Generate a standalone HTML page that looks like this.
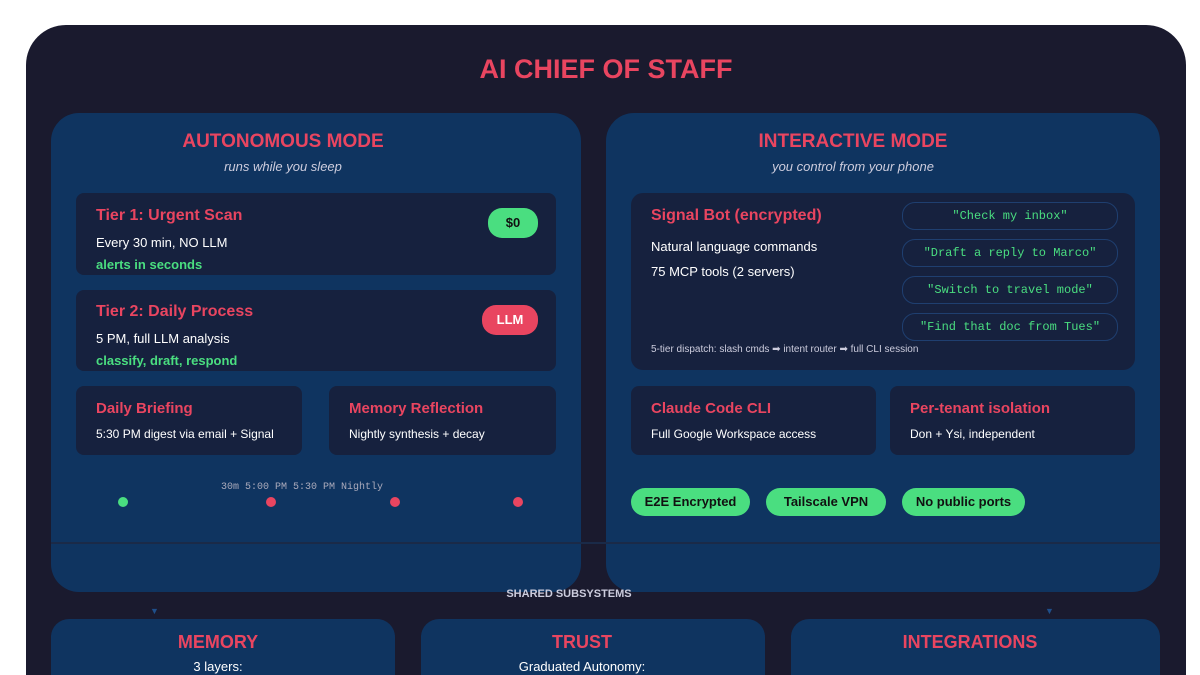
<!DOCTYPE html>
<html style="width:1200px;height:675px;overflow:hidden"><head><style>
*{margin:0;padding:0;box-sizing:border-box}
body{width:1200px;height:675px;background:#fff;font-family:"Liberation Sans",sans-serif;position:relative;overflow:hidden}
.a{position:absolute}
.outer{left:26px;top:25px;width:1160px;height:650px;background:#1a1a2e;border-radius:40px 40px 0 0}
.panel{background:#0f3460;border-radius:28px}
.card{background:#16213e;border-radius:8px}
.red{color:#e94560;font-weight:bold}
.t{color:#fff;font-size:13px}
.g{color:#4ade80;font-weight:bold;font-size:13px}
.pill{border-radius:14px;text-align:center;font-weight:bold;font-size:13px;line-height:28px}
.cmd{background:#16213e;border:1px solid #1f3f70;border-radius:13px;font-family:"Liberation Mono",monospace;font-size:12px;color:#4ade80;text-align:center;line-height:26px;width:216px;height:28px;left:902px}
.bad{background:#4ade80;color:#111;font-size:13px;font-weight:bold;border-radius:14px;text-align:center;line-height:28px;height:28px;top:488px}
.ct{text-align:center}
</style></head><body>
<div class="a outer"></div>
<div class="a red ct" style="left:26px;width:1160px;top:54px;font-size:27px">AI CHIEF OF STAFF</div>

<div class="a panel" style="left:51px;top:113px;width:530px;height:479px"></div>
<div class="a panel" style="left:606px;top:113px;width:554px;height:479px"></div>
<div class="a" style="left:51px;top:542px;width:1109px;height:2px;background:#1a2a48"></div>

<div class="a red ct" style="left:51px;width:464px;top:131px;font-size:19px">AUTONOMOUS MODE</div>
<div class="a ct" style="left:51px;width:464px;top:159px;font-size:13px;font-style:italic;color:#ccd">runs while you sleep</div>

<div class="a card" style="left:76px;top:193px;width:480px;height:82px"></div>
<div class="a red" style="left:96px;top:207px;font-size:16px">Tier 1: Urgent Scan</div>
<div class="a t" style="left:96px;top:235px">Every 30 min, NO LLM</div>
<div class="a g" style="left:96px;top:257px">alerts in seconds</div>
<div class="a pill" style="left:488px;top:208px;width:50px;height:30px;background:#4ade80;color:#111;line-height:30px">$0</div>

<div class="a card" style="left:76px;top:290px;width:480px;height:81px"></div>
<div class="a red" style="left:96px;top:303px;font-size:16px">Tier 2: Daily Process</div>
<div class="a t" style="left:96px;top:331px">5 PM, full LLM analysis</div>
<div class="a g" style="left:96px;top:353px">classify, draft, respond</div>
<div class="a pill" style="left:482px;top:305px;width:56px;height:30px;background:#e94560;color:#fff;line-height:30px">LLM</div>

<div class="a card" style="left:76px;top:386px;width:226px;height:69px"></div>
<div class="a red" style="left:96px;top:400px;font-size:15px">Daily Briefing</div>
<div class="a t" style="left:96px;top:427px;font-size:12px">5:30 PM digest via email + Signal</div>
<div class="a card" style="left:329px;top:386px;width:227px;height:69px"></div>
<div class="a red" style="left:349px;top:400px;font-size:15px">Memory Reflection</div>
<div class="a t" style="left:349px;top:427px;font-size:12px">Nightly synthesis + decay</div>

<div class="a" style="left:221px;top:482px;font-family:'Liberation Mono',monospace;font-size:10px;color:#aab">30m 5:00 PM 5:30 PM Nightly</div>
<div class="a" style="left:118px;top:497px;width:10px;height:10px;border-radius:5px;background:#4ade80"></div>
<div class="a" style="left:266px;top:497px;width:10px;height:10px;border-radius:5px;background:#e94560"></div>
<div class="a" style="left:390px;top:497px;width:10px;height:10px;border-radius:5px;background:#e94560"></div>
<div class="a" style="left:513px;top:497px;width:10px;height:10px;border-radius:5px;background:#e94560"></div>

<div class="a red ct" style="left:606px;width:494px;top:131px;font-size:19px">INTERACTIVE MODE</div>
<div class="a ct" style="left:606px;width:494px;top:159px;font-size:13px;font-style:italic;color:#ccd">you control from your phone</div>

<div class="a card" style="left:631px;top:193px;width:504px;height:177px;border-radius:12px"></div>
<div class="a red" style="left:651px;top:207px;font-size:16px">Signal Bot (encrypted)</div>
<div class="a t" style="left:651px;top:239px">Natural language commands</div>
<div class="a t" style="left:651px;top:264px">75 MCP tools (2 servers)</div>
<div class="a t" style="left:651px;top:344px;font-size:10px;color:#ccd">5-tier dispatch: slash cmds ➡ intent router ➡ full CLI session</div>
<div class="a cmd" style="top:202px">"Check my inbox"</div>
<div class="a cmd" style="top:239px">"Draft a reply to Marco"</div>
<div class="a cmd" style="top:276px">"Switch to travel mode"</div>
<div class="a cmd" style="top:313px">"Find that doc from Tues"</div>

<div class="a card" style="left:631px;top:386px;width:245px;height:69px"></div>
<div class="a red" style="left:651px;top:400px;font-size:15px">Claude Code CLI</div>
<div class="a t" style="left:651px;top:427px;font-size:12px">Full Google Workspace access</div>
<div class="a card" style="left:890px;top:386px;width:245px;height:69px"></div>
<div class="a red" style="left:910px;top:400px;font-size:15px">Per-tenant isolation</div>
<div class="a t" style="left:910px;top:427px;font-size:12px">Don + Ysi, independent</div>

<div class="a bad" style="left:631px;width:119px">E2E Encrypted</div>
<div class="a bad" style="left:766px;width:120px">Tailscale VPN</div>
<div class="a bad" style="left:902px;width:123px">No public ports</div>

<div class="a ct" style="left:26px;width:1086px;top:588px;font-size:11px;font-weight:bold;color:#ccd">SHARED SUBSYSTEMS</div>
<div class="a" style="left:150px;top:606px;color:#1f4f8a;font-size:9px">▼</div>
<div class="a" style="left:1045px;top:606px;color:#1f4f8a;font-size:9px">▼</div>

<div class="a panel" style="left:51px;top:619px;width:344px;height:56px;border-radius:18px 18px 0 0"></div>
<div class="a panel" style="left:421px;top:619px;width:344px;height:56px;border-radius:18px 18px 0 0"></div>
<div class="a panel" style="left:791px;top:619px;width:369px;height:56px;border-radius:18px 18px 0 0"></div>
<div class="a red ct" style="left:51px;width:334px;top:632px;font-size:18px">MEMORY</div>
<div class="a red ct" style="left:421px;width:322px;top:632px;font-size:18px">TRUST</div>
<div class="a red ct" style="left:791px;width:358px;top:632px;font-size:18px">INTEGRATIONS</div>
<div class="a t ct" style="left:51px;width:334px;top:659px">3 layers:</div>
<div class="a t ct" style="left:421px;width:322px;top:659px">Graduated Autonomy:</div>
</body></html>
